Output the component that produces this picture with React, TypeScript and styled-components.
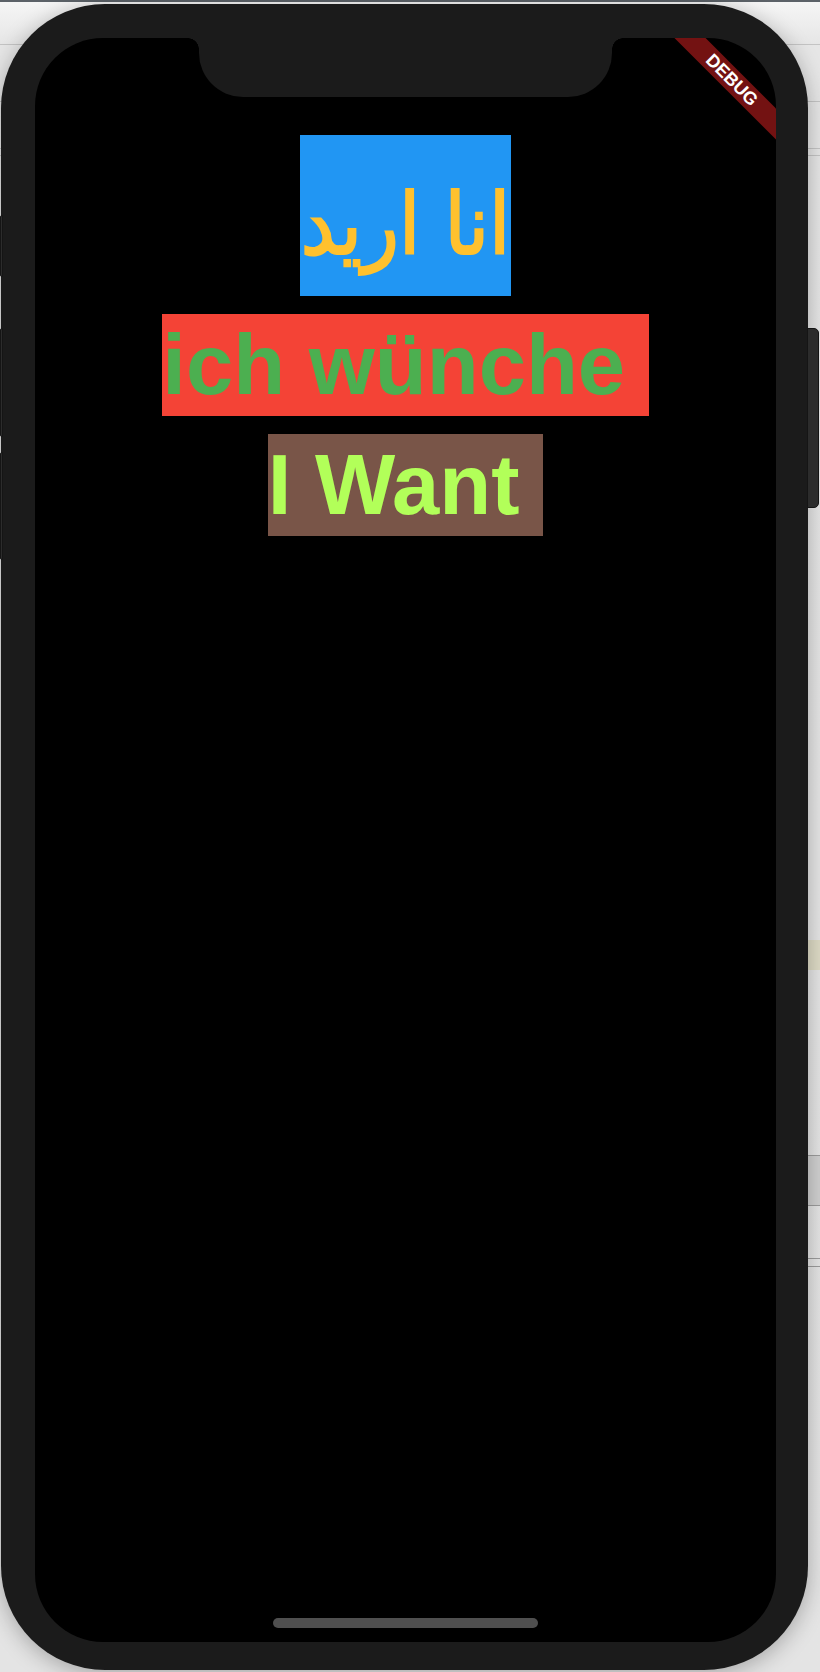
import { createGlobalStyle, styled } from "styled-components"

const GlobalStyle = createGlobalStyle`
  * { box-sizing: border-box; }
  html, body { margin: 0; padding: 0; }
  body {
    background: #e8e8e8;
    font-family: "Liberation Sans", Arial, sans-serif;
  }
`

const Stage = styled.div`
  width: 820px;
  height: 1672px;
  overflow: hidden;
  padding: 4px 0 0 1px;
  background:
    linear-gradient(#5c6268, #5c6268) 0 0 / 100% 2px no-repeat,
    linear-gradient(#c4c4c4, #c4c4c4) 0 44px / 100% 1px no-repeat,
    linear-gradient(#c4c4c4, #c4c4c4) 0 101px / 100% 1px no-repeat,
    linear-gradient(#c4c4c4, #c4c4c4) 0 148px / 100% 1px no-repeat,
    linear-gradient(#c4c4c4, #c4c4c4) 0 155px / 100% 1px no-repeat,
    linear-gradient(#dedbc6, #dedbc6) right 0 top 940px / 12px 30px no-repeat,
    linear-gradient(#9c9c9c, #9c9c9c) right 0 top 1155px / 12px 1px no-repeat,
    linear-gradient(#d0d0d0, #d0d0d0) right 0 top 1156px / 12px 49px no-repeat,
    linear-gradient(#9c9c9c, #9c9c9c) right 0 top 1205px / 12px 1px no-repeat,
    linear-gradient(#9c9c9c, #9c9c9c) right 0 top 1258px / 12px 1px no-repeat,
    linear-gradient(#9c9c9c, #9c9c9c) right 0 top 1266px / 12px 1px no-repeat,
    linear-gradient(#f6f6f6, #e6e6e6 44px, #e4e4e4);
`

const Phone = styled.div`
  position: relative;
  width: 807px;
  height: 1666px;
  padding: 34px 32px 28px 34px;
  display: flex;
  background: #1b1b1b;
  border-radius: 104px;
  box-shadow: 0 4px 22px rgba(0, 0, 0, 0.28);
`

// volume keys sticking out of the left edge
const LeftKeys = styled.div`
  position: absolute;
  left: -1px;
  top: 211px;
  display: flex;
  flex-direction: column;
`

const Key = styled.div<{ $height: number; $gap?: number }>`
  width: 3px;
  height: ${(p) => p.$height}px;
  margin-top: ${(p) => p.$gap ?? 0}px;
  background: #2c2c2c;
  border: 1px solid #151515;
  border-radius: 2px 0 0 2px;
`

const PowerKey = styled.div`
  position: absolute;
  right: -11px;
  top: 324px;
  width: 12px;
  height: 180px;
  background: #2c2c2c;
  border: 1px solid #151515;
  border-radius: 0 5px 5px 0;
`

const Screen = styled.div`
  position: relative;
  flex: 1;
  display: flex;
  flex-direction: column;
  align-items: center;
  background: #000;
  border-radius: 68px;
  overflow: hidden;
`

const Notch = styled.div`
  position: relative;
  flex: none;
  width: 413px;
  height: 59px;
  background: #1b1b1b;
  border-radius: 0 0 44px 44px;

  &::before,
  &::after {
    content: "";
    position: absolute;
    top: 0;
    width: 11px;
    height: 11px;
  }
  &::before {
    left: -11px;
    background: radial-gradient(circle at 0 100%, transparent 10.5px, #1b1b1b 11px);
  }
  &::after {
    right: -11px;
    background: radial-gradient(circle at 100% 100%, transparent 10.5px, #1b1b1b 11px);
  }
`

const DebugBanner = styled.div`
  position: absolute;
  top: 31px;
  right: -36px;
  width: 160px;
  height: 22px;
  display: flex;
  align-items: center;
  justify-content: center;
  background: #731212;
  color: #fff;
  font-family: "Liberation Sans", Arial, sans-serif;
  font-weight: 700;
  font-size: 18px;
  line-height: 1;
  transform: rotate(45deg);
`

const Words = styled.div`
  margin-top: 38px;
  display: flex;
  flex-direction: column;
  align-items: center;
  gap: 18px;
`

const Label = styled.span<{ $bg: string; $fg: string }>`
  display: block;
  white-space: pre;
  height: 102px;
  background: ${(p) => p.$bg};
  color: ${(p) => p.$fg};
  font-family: "Liberation Sans", Arial, sans-serif;
  font-weight: 700;
  font-size: 85px;
  line-height: 102px;
`

const ArabicLabel = styled(Label)`
  height: 161px;
  padding: 18px 1px 0;
  font-family: "DejaVu Sans Condensed", "DejaVu Sans", sans-serif;
  font-weight: 400;
  font-size: 85px;
  line-height: 143px;
  -webkit-text-stroke: 2px ${(p) => p.$fg};
`

const HomeIndicator = styled.div`
  margin-top: auto;
  margin-bottom: 14px;
  width: 265px;
  height: 10px;
  border-radius: 5px;
  background: #4f4f4f;
`

export default function App() {
  return (
    <>
      <GlobalStyle />
      <Stage>
        <Phone>
          <LeftKeys>
            <Key $height={62} />
            <Key $height={109} $gap={51} />
            <Key $height={108} $gap={15} />
          </LeftKeys>
          <PowerKey />
          <Screen>
            <Notch />
            <Words>
              <ArabicLabel $bg="#2196f3" $fg="#ffc12e" dir="rtl">
                انا اريد
              </ArabicLabel>
              <Label $bg="#f44336" $fg="#4caf50">
                {"ich wünche "}
              </Label>
              <Label $bg="#795548" $fg="#b2ff59">
                {"I Want "}
              </Label>
            </Words>
            <HomeIndicator />
            <DebugBanner>DEBUG</DebugBanner>
          </Screen>
        </Phone>
      </Stage>
    </>
  )
}
